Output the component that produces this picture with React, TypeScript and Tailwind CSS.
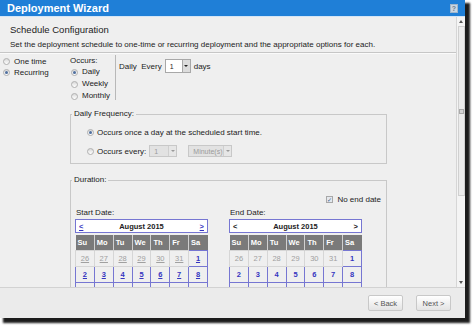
import React from "react"

const dayNames = ["Su", "Mo", "Tu", "We", "Th", "Fr", "Sa"]
const weeks = [
  [26, 27, 28, 29, 30, 31, 1],
  [2, 3, 4, 5, 6, 7, 8],
  [9, 10, 11, 12, 13, 14, 15],
]

function Radio({ checked = false }: { checked?: boolean }) {
  return (
    <span className="inline-flex h-[7px] w-[7px] shrink-0 items-center justify-center rounded-full border border-[#b0b0b0] bg-gradient-to-b from-[#dadada] to-white">
      {checked && <span className="h-[3px] w-[3px] rounded-full bg-[#4f6f9f]" />}
    </span>
  )
}

function Select({ value, width, disabled = false }: { value: string; width: string; disabled?: boolean }) {
  return (
    <div
      className={`flex ${disabled ? "h-[12px]" : "h-[14px]"} ${width} items-stretch border ${
        disabled ? "border-[#c8c8c8] bg-[#e2e2e2] text-[#9a9a9a]" : "border-[#a8a8a8] bg-white text-[#222]"
      }`}
    >
      <span className="flex flex-1 items-center pl-[4px] text-[7px]">{value}</span>
      <span
        className={`flex w-[8px] items-center justify-center border-l ${
          disabled ? "border-[#cfcfcf] bg-[#e6e6e6]" : "border-[#a8a8a8] bg-[#dcdcdc]"
        }`}
      >
        <span className={`h-0 w-0 border-x-[2px] border-t-[2px] border-x-transparent ${disabled ? "border-t-[#9a9a9a]" : "border-t-[#222]"}`} />
      </span>
    </div>
  )
}

function Calendar({ linked }: { linked: boolean }) {
  const arrow = linked ? "text-[#3434c0] underline" : "text-[#111]"
  return (
    <div className="w-[133px]">
      <div className="flex h-[14px] items-center justify-between border border-[#7676d2] bg-white px-[3px] text-[7.5px] font-bold text-[#222]">
        <span className={arrow}>&lt;</span>
        <span>August 2015</span>
        <span className={arrow}>&gt;</span>
      </div>
      <table className="mt-[2px] w-full border-collapse text-[7.5px]">
        <thead>
          <tr>
            {dayNames.map((d) => (
              <th
                key={d}
                className="h-[15px] w-[19px] border-x border-[#d0d0d0] bg-[#7a7a7a] pl-[2px] text-left font-bold text-white first:border-l-0 last:border-r-0"
              >
                {d}
              </th>
            ))}
          </tr>
        </thead>
        <tbody>
          {weeks.map((w, i) => (
            <tr key={i}>
              {w.map((n) => {
                const other = i === 0 && n > 20
                return (
                  <td
                    key={n}
                    className={`h-[16px] border text-center ${linked ? "underline" : ""} ${
                      other ? "border-[#d6d6d6] text-[#a0a0a0]" : "border-[#7676d2] font-bold text-[#3434c0]"
                    }`}
                  >
                    {n}
                  </td>
                )
              })}
            </tr>
          ))}
        </tbody>
      </table>
    </div>
  )
}

export default function App() {
  return (
    <div className="h-[328px] w-[474px] overflow-hidden bg-white font-['Liberation_Sans',Arial,sans-serif] text-[8px] leading-[11px] text-[#222]">
      <div className="flex h-[318px] w-[465px] flex-col bg-[#efefef] shadow-[4px_4px_2px_1px_#1c1c1c]">
        {/* title bar */}
        <div className="flex h-[17px] shrink-0 items-center justify-between border-b border-[#d3e5f6] bg-[#1f7fd7] px-[7px]">
          <span className="text-[11px] font-bold text-white">Deployment Wizard</span>
          <span className="flex h-[9px] w-[8px] items-center justify-center border border-[#9fb6cc] bg-[#c9d6e2] text-[7px] font-bold leading-none text-[#6a7d90]">
            ?
          </span>
        </div>

        <div className="flex min-h-0 flex-1">
          <div className="min-w-0 flex-1 overflow-hidden">
            <div className="pl-[10px] pt-[7px]">
              <div className="text-[9.5px] leading-[12px]">Schedule Configuration</div>
              <div className="mt-[3px]">
                Set the deployment schedule to one-time or recurring deployment and the appropriate options for each.
              </div>
            </div>
            <div className="mt-[2px] h-[2px] border-t border-[#c6c6c6] bg-white/70" />

            {/* occurrence */}
            <div className="flex h-[46px] pt-[1px]">
              <div className="flex w-[70px] flex-col pl-[3px] pt-[1px]">
                <label className="flex items-center gap-[4px]">
                  <Radio />
                  <span>One time</span>
                </label>
                <label className="flex items-center gap-[4px]">
                  <Radio checked />
                  <span>Recurring</span>
                </label>
              </div>
              <div className="flex w-[45px] flex-col pt-[1px]">
                <span className="leading-[10px]">Occurs:</span>
                <label className="flex items-center gap-[4px] pl-[1px] leading-[12px]">
                  <Radio checked />
                  <span>Daily</span>
                </label>
                <label className="flex items-center gap-[4px] pl-[1px] leading-[12px]">
                  <Radio />
                  <span>Weekly</span>
                </label>
                <label className="flex items-center gap-[4px] pl-[1px] leading-[12px]">
                  <Radio />
                  <span>Monthly</span>
                </label>
              </div>
              <div className="flex border-l border-[#b8b8b8] pl-[3px] pt-[4px]">
                <div className="flex h-[14px] items-center">
                  <span>Daily&nbsp; Every</span>
                  <span className="ml-[3px]" />
                  <Select value="1" width="w-[26px]" />
                  <span className="ml-[3px]">days</span>
                </div>
              </div>
            </div>

            {/* daily frequency */}
            <fieldset className="ml-[70px] mt-[8px] h-[56px] w-[317px] border border-[#c8c8c8]">
              <legend className="ml-[1px] px-[2px] leading-[12px]">Daily Frequency:</legend>
              <div className="flex flex-col gap-[7px] pl-[16px] pt-[7px]">
                <label className="flex items-center gap-[3px]">
                  <Radio checked />
                  <span>Occurs once a day at the scheduled start time.</span>
                </label>
                <div className="flex h-[12px] items-center">
                  <Radio />
                  <span className="ml-[3px]">Occurs every:</span>
                  <span className="ml-[3px]" />
                  <Select value="1" width="w-[28px]" disabled />
                  <span className="ml-[11px]" />
                  <Select value="Minute(s)" width="w-[44px]" disabled />
                </div>
              </div>
            </fieldset>

            {/* duration */}
            <fieldset className="ml-[70px] mt-[10px] h-[140px] w-[317px] border border-[#c8c8c8]">
              <legend className="ml-[1px] px-[2px] leading-[12px]">Duration:</legend>
              <div className="flex items-center justify-end gap-[4px] pr-[5px] pt-[8px]">
                <span className="flex h-[7px] w-[7px] items-center justify-center border border-[#a8a8a8] bg-[#e4e8ee] text-[6px] leading-none text-[#3a5a8a]">
                  ✓
                </span>
                <span>No end date</span>
              </div>
              <div className="mt-[2px] flex gap-[21px] pl-[4px]">
                <div>
                  <div className="mb-[1px] pl-[1px]">Start Date:</div>
                  <Calendar linked />
                </div>
                <div>
                  <div className="mb-[1px] pl-[1px]">End Date:</div>
                  <Calendar linked={false} />
                </div>
              </div>
            </fieldset>
          </div>

          {/* scrollbar */}
          <div className="flex w-[9px] shrink-0 flex-col items-center border-l border-[#d6d6d6] bg-[#f4f4f4] py-[3px]">
            <span className="h-0 w-0 border-x-[2px] border-b-[3px] border-x-transparent border-b-[#555]" />
            <div className="mt-[3px] flex h-[170px] w-[7px] items-center justify-center border border-[#d0d0d0] bg-[#ececec]">
              <span className="h-[5px] w-[5px] border border-[#aaa] bg-[#d4d4d4]" />
            </div>
            <span className="mt-auto h-0 w-0 border-x-[2px] border-t-[3px] border-x-transparent border-t-[#555]" />
          </div>
        </div>

        {/* footer */}
        <div className="flex h-[31px] shrink-0 items-center justify-end gap-[13px] border-t border-[#d2d2d2] bg-[#ebebeb] pr-[14px]">
          <button className="h-[16px] w-[35px] rounded-[2px] border border-[#c8c8c8] bg-gradient-to-b from-white to-[#e4e4e4] text-[7.5px] text-[#555]">
            &lt; Back
          </button>
          <button className="h-[16px] w-[35px] rounded-[2px] border border-[#c8c8c8] bg-gradient-to-b from-white to-[#e4e4e4] text-[7.5px] text-[#555]">
            Next &gt;
          </button>
        </div>
      </div>
    </div>
  )
}
